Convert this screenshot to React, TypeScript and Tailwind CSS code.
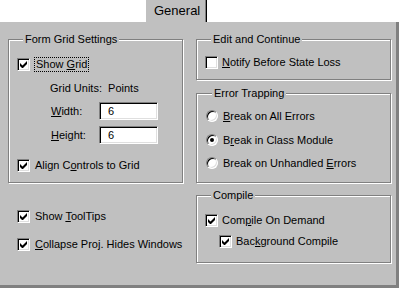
import type { ReactNode } from "react"

const font = { fontFamily: '"Liberation Sans", Arial, sans-serif' }

const Check = ({ checked }: { checked?: boolean }) => (
  <span className="w-[13px] h-[13px] shrink-0 bg-white border border-t-[#808080] border-l-[#808080] border-b-white border-r-white shadow-[inset_1px_1px_0_#000,inset_-1px_-1px_0_#dfdfdf] flex items-center justify-center">
    {checked && (
      <svg width="7" height="7" viewBox="0 0 7 7">
        <path d="M0 2v3l2 2h1l4-4V0L2.5 4.5z" fill="#000" />
      </svg>
    )}
  </span>
)

const Radio = ({ checked }: { checked?: boolean }) => (
  <span className="w-[12px] h-[12px] shrink-0 rounded-full bg-white border border-t-[#808080] border-l-[#808080] border-b-white border-r-white shadow-[inset_1px_1px_0_#000,inset_-1px_-1px_0_#dfdfdf] flex items-center justify-center">
    {checked && <span className="w-[4px] h-[4px] rounded-full bg-black" />}
  </span>
)

// label text with an underlined access key
const Ul = ({ pre, k, post }: { pre?: string; k: string; post?: string }) => (
  <span>
    {pre}
    <span className="underline underline-offset-1">{k}</span>
    {post}
  </span>
)

const Group = ({ title, className, children }: { title: string; className?: string; children: ReactNode }) => (
  <fieldset className={"min-w-0 border border-[#808080] shadow-[inset_1px_1px_0_#fff,1px_1px_0_#fff] " + (className ?? "")}>
    <legend className="ml-[6px] px-[2px] leading-[13px] bg-[#c0c0c0]">{title}</legend>
    {children}
  </fieldset>
)

const Row = ({ children, className }: { children: ReactNode; className?: string }) => (
  <div className={"h-[16px] flex items-center " + (className ?? "")}>{children}</div>
)

const Field = ({ value }: { value: string }) => (
  <div className="w-[59px] h-[18px] bg-white border border-t-[#808080] border-l-[#808080] border-b-white border-r-white shadow-[inset_1px_1px_0_#000,inset_-1px_-1px_0_#dfdfdf] pl-[8px] flex items-center">
    {value}
  </div>
)

const App = () => {
  return (
    <div className="w-[399px] h-[288px] bg-white flex flex-col text-[11px] text-black" style={font}>
      <div className="h-[22px] flex shrink-0">
        <div className="ml-[146px] w-[61px] h-full bg-[#c0c0c0] border-r border-black shadow-[inset_-1px_0_0_#808080] pl-[8px] flex items-center text-[13px]">
          General
        </div>
      </div>
      <div className="flex-1 bg-[#c0c0c0] border-r-[3px] border-b-[3px] border-[#808080] pt-[11px] pl-[8px] flex gap-[13px]">
        <div className="w-[175px] flex flex-col">
          <Group title="Form Grid Settings" className="pt-[10px] pb-[9px] pl-[8px]">
            <Row className="gap-[4px]">
              <Check checked />
              <span className="border border-dotted border-black px-[1px] leading-[13px]">
                <Ul pre="Show " k="G" post="rid" />
              </span>
            </Row>
            <Row className="mt-[8px] pl-[33px]">Grid Units:&nbsp; Points</Row>
            <div className="mt-[6px] h-[18px] flex items-center pl-[34px]">
              <span className="w-[48px]"><Ul k="W" post="idth:" /></span>
              <Field value="6" />
            </div>
            <div className="mt-[6px] h-[18px] flex items-center pl-[34px]">
              <span className="w-[48px]"><Ul k="H" post="eight:" /></span>
              <Field value="6" />
            </div>
            <Row className="mt-[13px] gap-[5px]">
              <Check checked />
              <Ul pre="Align C" k="o" post="ntrols to Grid" />
            </Row>
          </Group>
          <Row className="mt-[25px] pl-[9px] gap-[5px]">
            <Check checked />
            <Ul pre="Show " k="T" post="oolTips" />
          </Row>
          <Row className="mt-[12px] pl-[9px] gap-[5px]">
            <Check checked />
            <Ul k="C" post="ollapse Proj. Hides Windows" />
          </Row>
        </div>
        <div className="w-[195px] flex flex-col">
          <Group title="Edit and Continue" className="pt-[8px] pb-[9px] pl-[8px]">
            <Row className="gap-[4px]">
              <Check />
              <Ul k="N" post="otify Before State Loss" />
            </Row>
          </Group>
          <Group title="Error Trapping" className="mt-[7px] pt-[8px] pb-[11px] pl-[9px]">
            <Row className="gap-[5px]">
              <Radio />
              <Ul k="B" post="reak on All Errors" />
            </Row>
            <Row className="mt-[8px] gap-[5px]">
              <Radio checked />
              <Ul pre="B" k="r" post="eak in Class Module" />
            </Row>
            <Row className="mt-[7px] gap-[5px]">
              <Radio />
              <Ul pre="Break on Unhandled " k="E" post="rrors" />
            </Row>
          </Group>
          <Group title="Compile" className="mt-[6px] pt-[10px] pb-[13px] pl-[8px]">
            <Row className="gap-[4px]">
              <Check checked />
              <Ul pre="Com" k="p" post="ile On Demand" />
            </Row>
            <Row className="mt-[5px] pl-[14px] gap-[4px]">
              <Check checked />
              <Ul pre="Bac" k="k" post="ground Compile" />
            </Row>
          </Group>
        </div>
      </div>
    </div>
  )
}

export default App
